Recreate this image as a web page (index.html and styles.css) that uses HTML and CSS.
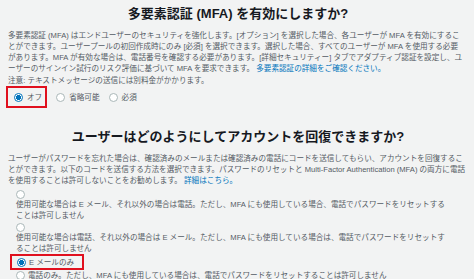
FILE: index.html
```html
<!DOCTYPE html>
<html lang="ja">
<head>
<meta charset="utf-8">
<link rel="stylesheet" href="styles.css">
</head>
<body>
<main class="page">
  <section class="section">
    <h1 class="title">多要素認証 (MFA) を有効にしますか?</h1>
    <p class="desc">多要素認証 (MFA) はエンドユーザーのセキュリティを強化します。[オプション] を選択した場合、各ユーザーが MFA を有効にするこ<br>とができます。ユーザープールの初回作成時にのみ [必須] を選択できます。選択した場合、すべてのユーザーが MFA を使用する必要<br>があります。MFA が有効な場合は、電話番号を確認する必要があります。[詳細セキュリティー] タブでアダプティブ認証を設定し、ユ<br>ーザーのサインイン試行のリスク評価に基づいて MFA を要求できます。 <a class="link" href="#">多要素認証の詳細をご確認ください。</a></p>
    <p class="note">注意: テキストメッセージの送信には別料金がかかります。</p>
    <div class="radio-row">
      <label class="opt highlight"><span class="radio checked"></span>オフ</label>
      <label class="opt"><span class="radio"></span>省略可能</label>
      <label class="opt"><span class="radio"></span>必須</label>
    </div>
  </section>
  <section class="section second">
    <h1 class="title">ユーザーはどのようにしてアカウントを回復できますか?</h1>
    <p class="desc">ユーザーがパスワードを忘れた場合は、確認済みのメールまたは確認済みの電話にコードを送信してもらい、アカウントを回復するこ<br>とができます。以下のコードを送信する方法を選択できます。パスワードのリセットと Multi-Factor Authentication (MFA) の両方に電話<br>を使用することは許可しないことをお勧めします。 <a class="link" href="#">詳細はこちら。</a></p>
    <div class="options">
      <div class="block-opt">
        <span class="radio"></span>
        <div class="opt-text">使用可能な場合は E メール、それ以外の場合は電話。ただし、MFA にも使用している場合、電話でパスワードをリセットする<br>ことは許可しません</div>
      </div>
      <div class="block-opt">
        <span class="radio"></span>
        <div class="opt-text">使用可能な場合は電話、それ以外の場合は E メール。ただし、MFA にも使用している場合は、電話でパスワードをリセットす<br>ることは許可しません</div>
      </div>
      <label class="inline-opt highlight"><span class="radio checked"></span>E メールのみ</label>
      <label class="inline-opt"><span class="radio"></span>電話のみ。ただし、MFA にも使用している場合は、電話でパスワードをリセットすることは許可しません</label>
    </div>
  </section>
</main>
</body>
</html>
```

FILE: styles.css
```css
* { box-sizing: border-box; }
html, body { margin: 0; padding: 0; }
body {
  width: 474px;
  height: 279px;
  overflow: hidden;
  background: #f2f3f3;
  font-family: "Liberation Sans", "Noto Sans CJK JP", sans-serif;
  font-size: 7.6px;
  color: #545b64;
}
.page { padding: 0 6px 0 8px; }
.title {
  margin: 0;
  padding-top: 5px;
  font-size: 13px;
  line-height: 18px;
  font-weight: bold;
  text-align: center;
  color: #16191f;
}
.desc {
  margin: 6.5px 0 0;
  line-height: 11px;
  white-space: nowrap;
}
.link { color: #0073bb; text-decoration: none; }
.note { margin: 1px 0 0; line-height: 11px; }
.radio-row {
  display: flex;
  align-items: center;
  gap: 9px;
  margin-top: 0.5px;
  margin-left: -2px;
}
.opt {
  display: flex;
  align-items: center;
  gap: 4px;
  height: 22px;
  line-height: 11px;
}
.radio-row .opt.highlight { padding: 0 3px 0 6px; border: 2.5px solid #e0101e; }
.radio {
  display: inline-block;
  flex: none;
  width: 9px;
  height: 9px;
  border-radius: 50%;
  border: 1px solid #aab7b8;
  background: #fff;
}
.radio.checked {
  border: 1px solid #0073bb;
  background: radial-gradient(circle, #0073bb 0 2.3px, #fff 2.6px);
}
.second .title { padding-top: 0; margin-top: 20px; }
.second .desc { margin-top: 7px; }
.options { margin-top: 3px; padding-left: 8px; }
.block-opt { display: flex; flex-direction: column; line-height: 11px; }
.block-opt + .block-opt { margin-top: 1px; }
.block-opt .radio { margin: 1px 0 0; }
.opt-text { white-space: nowrap; }
.inline-opt {
  display: flex;
  align-items: center;
  gap: 3px;
  line-height: 11px;
  white-space: nowrap;
}
.inline-opt.highlight {
  width: 74px;
  height: 16px;
  margin-left: -6px;
  padding-left: 5px;
  border: 2.5px solid #e0101e;
}
```
